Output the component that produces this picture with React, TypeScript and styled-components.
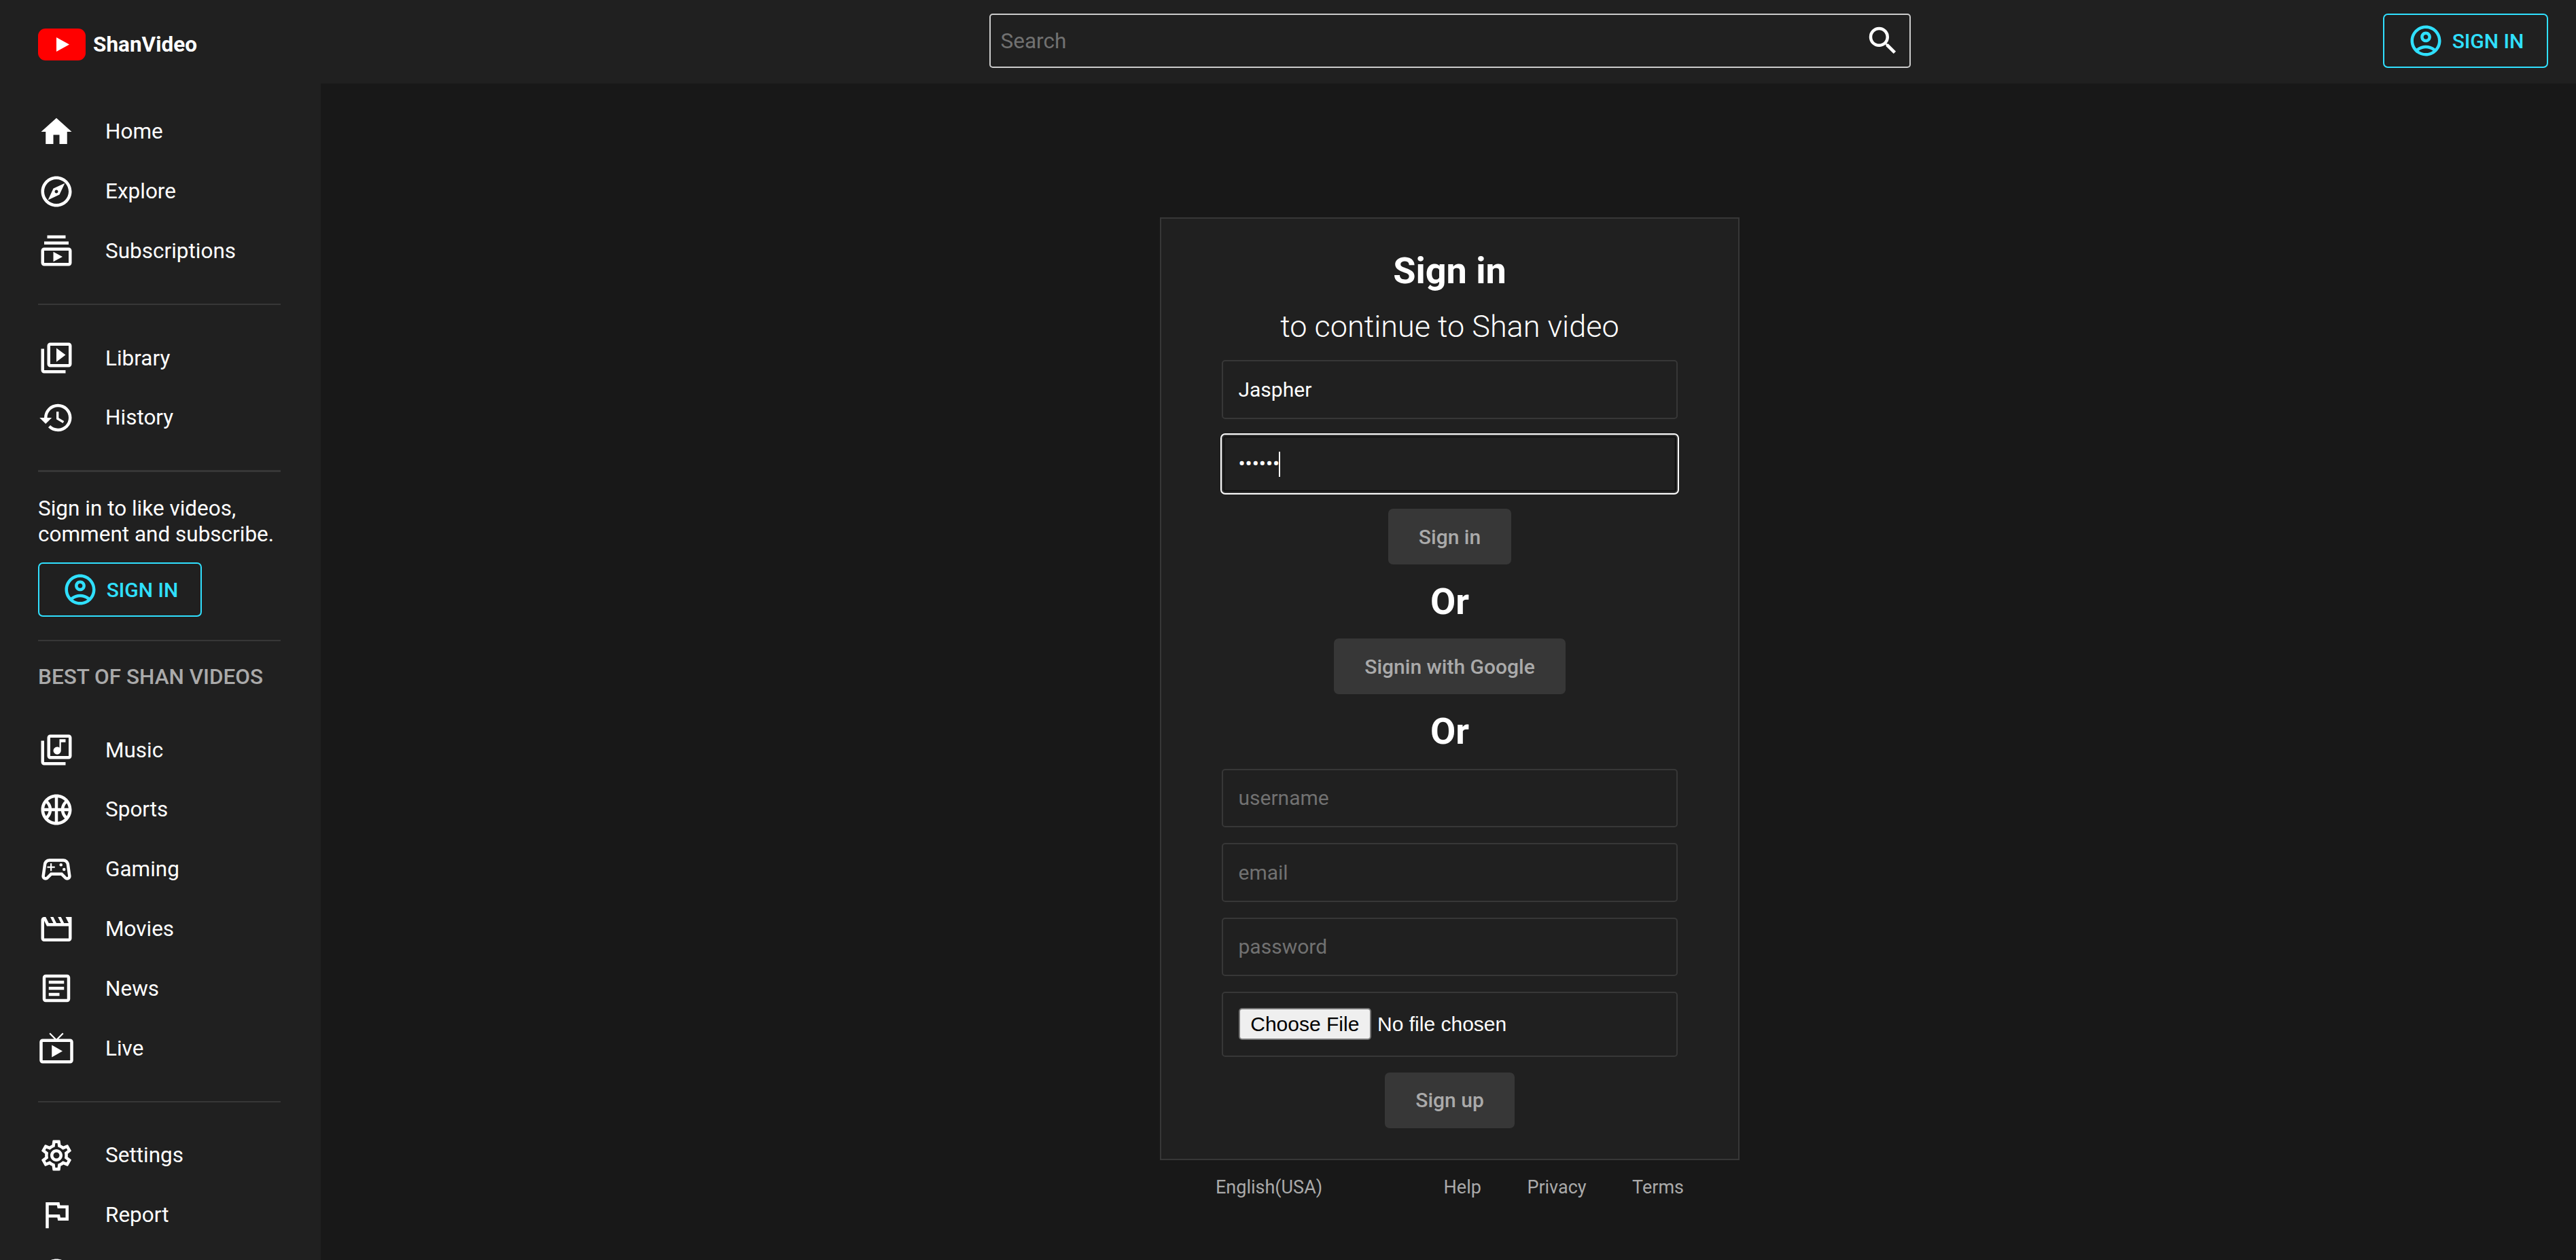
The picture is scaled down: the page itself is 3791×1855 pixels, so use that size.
import React from "react";
import styled, { createGlobalStyle } from "styled-components";
import {
  MdHome,
  MdOutlineAccountCircle,
  MdOutlineArticle,
  MdOutlineExplore,
  MdOutlineFlag,
  MdOutlineHelpOutline,
  MdOutlineHistory,
  MdOutlineLibraryMusic,
  MdOutlineLiveTv,
  MdOutlineMovie,
  MdOutlineSettings,
  MdOutlineSportsBasketball,
  MdOutlineSportsEsports,
  MdOutlineSubscriptions,
  MdOutlineVideoLibrary,
  MdSearch,
} from "react-icons/md";

const GlobalStyle = createGlobalStyle`
  * {
    box-sizing: border-box;
  }

  html,
  body {
    margin: 0;
    height: 100%;
    overflow: hidden;
    background: #181818;
    color: #fff;
    font-family: Roboto, "Liberation Sans", sans-serif;
  }
`;

const Page = styled("div")`
  height: 100vh;
  display: flex;
  flex-direction: column;
`;

const Header = styled("header")`
  height: 123px;
  flex: none;
  display: grid;
  grid-template-columns: 1399.5px 1356px 1fr;
  align-items: center;
  padding: 0 41px 3px 56px;
  background: #202020;
`;

const Logo = styled("div")`
  display: flex;
  align-items: center;
  gap: 11px;
  margin-top: 10px;
  font-size: 31.5px;
  font-weight: 700;
`;

const SearchBar = styled("form")`
  height: 80px;
  display: flex;
  align-items: center;
  padding: 0 12px 0 15px;
  border: 2.25px solid #ccc;
  border-radius: 5px;
  background: #202020;

  input {
    flex: 1;
    min-width: 0;
    border: 0;
    outline: 0;
    padding: 0;
    background: transparent;
    color: #fff;
    font: inherit;
    font-size: 31.5px;
  }

  input::placeholder {
    color: #717171;
  }
`;

const OutlineButton = styled("button")<{ $width: number }>`
  width: ${(p) => p.$width}px;
  height: 80px;
  display: flex;
  align-items: center;
  justify-content: center;
  gap: 12px;
  padding: 0;
  border: 2.25px solid #30e0ff;
  border-radius: 7px;
  background: transparent;
  color: #30e0ff;
  font-family: inherit;
  font-size: 30px;
  font-weight: 500;
`;

const HeaderRight = styled("div")`
  display: flex;
  justify-content: flex-end;
`;

const Body = styled("div")`
  flex: 1;
  min-height: 0;
  display: flex;
`;

const Sidebar = styled("aside")`
  width: 472px;
  flex: none;
  overflow: hidden;
  padding: 27px 59px 0 56px;
  background: #202020;
`;

const NavRow = styled("a")`
  height: 87.8px;
  display: flex;
  align-items: center;
  gap: 45px;
  color: #fff;
  font-size: 31.5px;
`;

const Divider = styled("hr")`
  height: 2.25px;
  margin: 33.75px 0;
  border: 0;
  background: #373737;
`;

const SignInNote = styled("p")`
  margin: 0 0 23px;
  padding-top: 2px;
  font-size: 31.5px;
  line-height: 37.5px;
`;

const SectionTitle = styled("h2")`
  margin: 0 0 45px;
  color: #aaa;
  font-size: 31.5px;
  font-weight: 500;
  line-height: 37px;
`;

const Main = styled("main")`
  flex: 1;
  min-width: 0;
  display: flex;
  flex-direction: column;
  align-items: center;
  padding: 197px 0 0 4px;
  background: #181818;
`;

const Card = styled("form")`
  width: 853px;
  display: flex;
  flex-direction: column;
  align-items: center;
  gap: 23px;
  padding: 45px 0 45px;
  border: 2.25px solid #373737;
  background: #202020;
`;

const Title = styled("h1")`
  margin: 0;
  font-size: 54px;
  font-weight: 700;
  line-height: 63.25px;
`;

const Subtitle = styled("h3")`
  margin: 0 0 -2px;
  font-size: 45px;
  font-weight: 300;
  line-height: 55.75px;
`;

const Field = styled("div")`
  position: relative;
  width: 671px;
`;

const TextInput = styled("input")<{ $focused?: boolean }>`
  display: block;
  width: 100%;
  height: 86.5px;
  padding: 0 22.5px;
  border: 2.25px solid #373737;
  border-radius: 5px;
  outline: ${(p) => (p.$focused ? "2.25px solid #fff" : "0")};
  box-shadow: ${(p) => (p.$focused ? "inset 0 0 0 2.25px #101010" : "none")};
  background: #202020;
  color: #fff;
  font-family: inherit;
  font-size: 30px;

  &::placeholder {
    color: #717171;
  }
`;

const Caret = styled("span")`
  position: absolute;
  left: 83.5px;
  top: 25px;
  width: 2.25px;
  height: 37px;
  background: #fff;
`;

const FileBox = styled("div")`
  width: 671px;
  height: 95.75px;
  display: flex;
  align-items: center;
  padding: 0 22.5px;
  border: 2.25px solid #373737;
  border-radius: 5px;

  input {
    color: #fff;
    font-family: "Liberation Sans", Arial, sans-serif;
    font-size: 30px;
  }

  input::file-selector-button {
    height: 47px;
    margin-right: 9px;
    padding: 0 15.75px;
    border: 2.25px solid #767676;
    border-radius: 5px;
    background: #efefef;
    color: #000;
    font: inherit;
  }
`;

const FormButton = styled("button")`
  height: 82px;
  padding: 0 45px;
  border: 0;
  border-radius: 7px;
  background: #373737;
  color: #aaa;
  font-family: inherit;
  font-size: 30px;
  font-weight: 500;
`;

const FormFooter = styled("footer")`
  width: 689px;
  display: flex;
  justify-content: space-between;
  margin-top: 24px;
  color: #aaa;
  font-size: 27px;
  line-height: 32px;
`;

const FooterLinks = styled("nav")`
  display: flex;
  gap: 67.5px;
`;

const navTop = [
  { icon: MdHome, label: "Home" },
  { icon: MdOutlineExplore, label: "Explore" },
  { icon: MdOutlineSubscriptions, label: "Subscriptions" },
];

const navLibrary = [
  { icon: MdOutlineVideoLibrary, label: "Library" },
  { icon: MdOutlineHistory, label: "History" },
];

const navBest = [
  { icon: MdOutlineLibraryMusic, label: "Music" },
  { icon: MdOutlineSportsBasketball, label: "Sports" },
  { icon: MdOutlineSportsEsports, label: "Gaming" },
  { icon: MdOutlineMovie, label: "Movies" },
  { icon: MdOutlineArticle, label: "News" },
  { icon: MdOutlineLiveTv, label: "Live" },
];

const navBottom = [
  { icon: MdOutlineSettings, label: "Settings" },
  { icon: MdOutlineFlag, label: "Report" },
  { icon: MdOutlineHelpOutline, label: "Help" },
];

const renderRows = (rows: typeof navTop) =>
  rows.map(({ icon: Icon, label }) => (
    <NavRow key={label}>
      <Icon size={54} />
      {label}
    </NavRow>
  ));

const SignInButton = ({ width }: { width: number }) => (
  <OutlineButton type="button" $width={width}>
    <MdOutlineAccountCircle size={54} />
    SIGN IN
  </OutlineButton>
);

export default function App() {
  return (
    <Page>
      <GlobalStyle />
      <Header>
        <Logo>
          <svg width="70" height="47" viewBox="0 0 70 47">
            <rect width="70" height="47" rx="11" fill="#f00" />
            <path d="M27 13 46 23.5 27 34z" fill="#fff" />
          </svg>
          ShanVideo
        </Logo>
        <SearchBar>
          <input placeholder="Search" />
          <MdSearch size={54} />
        </SearchBar>
        <HeaderRight>
          <SignInButton width={243} />
        </HeaderRight>
      </Header>
      <Body>
        <Sidebar>
          {renderRows(navTop)}
          <Divider />
          {renderRows(navLibrary)}
          <Divider />
          <SignInNote>
            Sign in to like videos,
            <br />
            comment and subscribe.
          </SignInNote>
          <SignInButton width={241} />
          <Divider />
          <SectionTitle>BEST OF SHAN VIDEOS</SectionTitle>
          {renderRows(navBest)}
          <Divider />
          {renderRows(navBottom)}
        </Sidebar>
        <Main>
          <Card>
            <Title>Sign in</Title>
            <Subtitle>to continue to Shan video</Subtitle>
            <Field>
              <TextInput defaultValue="Jaspher" />
            </Field>
            <Field>
              <TextInput type="password" defaultValue="123456" $focused />
              <Caret />
            </Field>
            <FormButton type="button">Sign in</FormButton>
            <Title as="h2">Or</Title>
            <FormButton type="button">Signin with Google</FormButton>
            <Title as="h2">Or</Title>
            <Field>
              <TextInput placeholder="username" />
            </Field>
            <Field>
              <TextInput placeholder="email" />
            </Field>
            <Field>
              <TextInput type="password" placeholder="password" />
            </Field>
            <FileBox>
              <input type="file" />
            </FileBox>
            <FormButton type="button">Sign up</FormButton>
          </Card>
          <FormFooter>
            <span>English(USA)</span>
            <FooterLinks>
              <span>Help</span>
              <span>Privacy</span>
              <span>Terms</span>
            </FooterLinks>
          </FormFooter>
        </Main>
      </Body>
    </Page>
  );
}
